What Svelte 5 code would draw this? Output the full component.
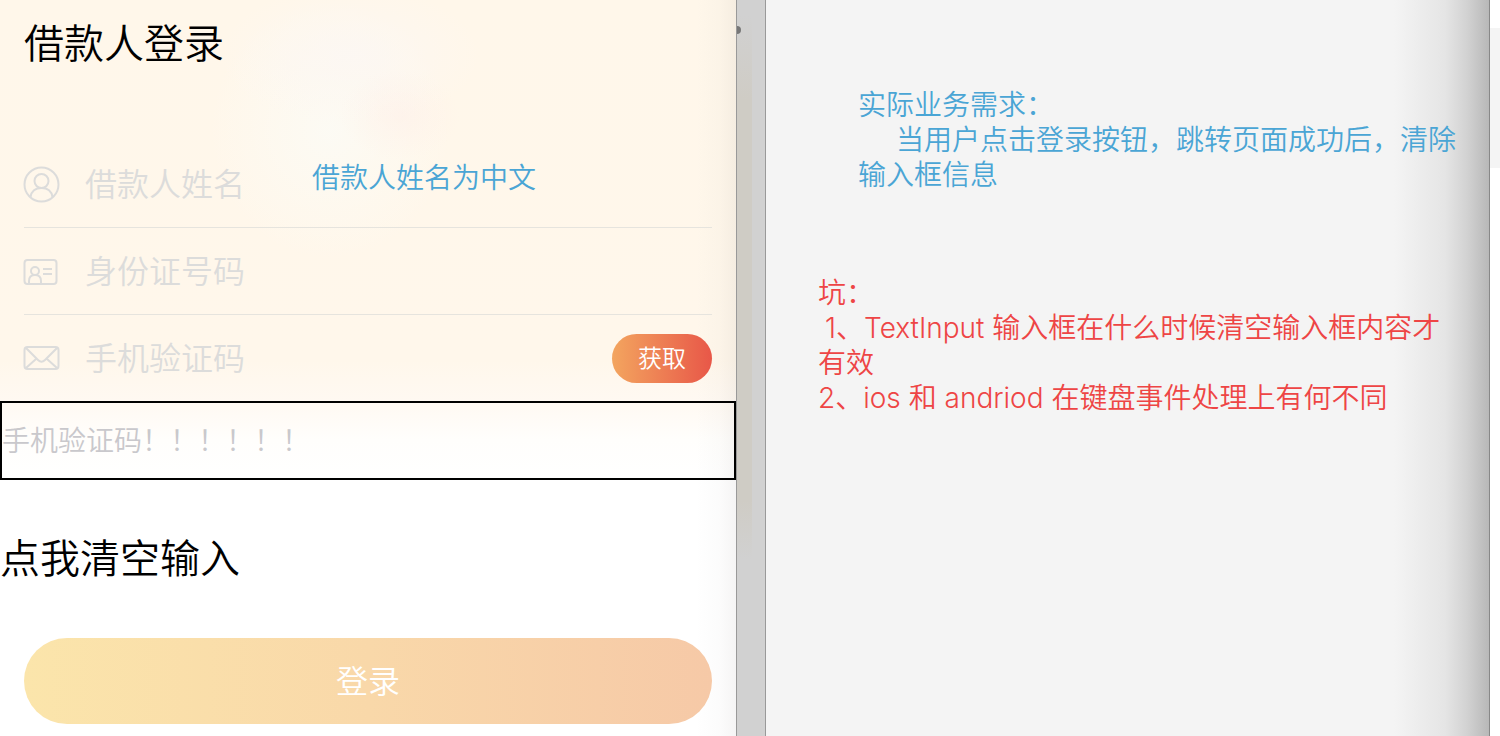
<script>
    let name = $state('');
    let idCard = $state('');
    let code = $state('');
    let extra = $state('');

    const clear = () => {
        extra = '';
    };
</script>


<main>
    <form class="phone" onsubmit={(e) => e.preventDefault()}>
        <h1>借款人登录</h1>

        <div class="row">
            <label for="name" aria-label="借款人姓名">
                <svg viewBox="0 0 36 36">
                    <circle cx="17.5" cy="18.5" r="17" />
                    <circle cx="17.5" cy="15" r="7" />
                    <path d="M6.5 31c1-6 5-9 11-9s10 3 11 9" />
                </svg>
            </label>
            <input id="name" type="text" placeholder="借款人姓名" bind:value={name}>
            <span class="note">借款人姓名为中文</span>
        </div>

        <div class="row">
            <label for="id-card" aria-label="身份证号码">
                <svg viewBox="0 0 36 36">
                    <rect x="0.5" y="7" width="32" height="24" rx="3" />
                    <circle cx="11" cy="18" r="4" />
                    <path d="M5 30v-2c0-4 2-6 6-6s6 2 6 6v2M19 16h9M19 21h9" />
                </svg>
            </label>
            <input id="id-card" type="text" placeholder="身份证号码" bind:value={idCard}>
        </div>

        <div class="row last">
            <label for="code" aria-label="手机验证码">
                <svg viewBox="0 0 36 36">
                    <rect x="0.5" y="7" width="34" height="22" rx="3" />
                    <path d="M2 8l12 12q3.500 3.500 7 0L33 8M2 28l10-9M33 28l-10-9" />
                </svg>
            </label>
            <input id="code" type="text" placeholder="手机验证码" bind:value={code}>
            <button class="fetch" type="button">获取</button>
        </div>

        <input class="boxed" type="text" aria-label="手机验证码" placeholder="手机验证码！！！！！！" bind:value={extra}>

        <button class="clear" type="button" onclick={clear}>点我清空输入</button>
        <button class="login" type="submit">登录</button>
    </form>

    <div class="gutter"><i></i></div>

    <section class="notes">
        <div class="need">
            <p>实际业务需求：</p>
            <p class="indent">当用户点击登录按钮，跳转页面成功后，清除输入框信息</p>
        </div>
        <div class="traps">
            <p>坑：</p>
            <p class="first">1、TextInput 输入框在什么时候清空输入框内容才有效</p>
            <p>2、ios 和 andriod 在键盘事件处理上有何不同</p>
        </div>
    </section>

    <div class="edge"></div>
</main>


<style>
    :global(body) {
        margin: 0;
    }

    main {
        display: grid;
        grid-template-columns: 736fr 30fr 724fr 10fr;
        min-height: 100vh;
        font-family: Inter, "Noto Sans CJK SC", sans-serif;
        font-weight: 350;
    }

    input, button {
        margin: 0;
        padding: 0;
        border: 0;
        background: none;
        color: #000;
        font: inherit;
    }

    h1, p {
        margin: 0;
        font-weight: inherit;
    }

    .phone {
        display: flex;
        flex-direction: column;
        min-width: 0;
        background:
            linear-gradient(to left, rgba(90, 80, 80, 0.06), rgba(90, 80, 80, 0.02) 16px, transparent 40px),
            radial-gradient(ellipse 60px 45px at 400px 115px, rgba(255, 238, 232, 0.5), transparent),
            radial-gradient(ellipse 130px 70px at 350px 55px, rgba(252, 247, 243, 0.9), transparent),
            radial-gradient(ellipse 120px 130px at 330px 130px, rgba(252, 251, 245, 0.9), transparent),
            linear-gradient(#fff7ea 0, #fff7eb 360px, #fff9f2 400px, #fffefc 440px, #fff 480px);
    }

    h1 {
        padding: 14px 24px 67px;
        font-size: 40px;
        line-height: 60px;
    }

    .row {
        position: relative;
        display: flex;
        align-items: center;
        box-sizing: border-box;
        height: 87px;
        margin: 0 24px;
        border-bottom: 1px solid #e6e4de;
    }

    .row.last {
        height: 86px;
        border: 0;
    }

    .row label {
        width: 61px;
        height: 36px;
    }

    svg {
        display: block;
        width: 36px;
        height: 36px;
        overflow: visible;
        fill: none;
        stroke: #dcdcdb;
        stroke-width: 2;
    }

    .row input {
        flex: 1;
        min-width: 0;
        height: 60px;
        font-size: 32px;
    }

    .row input::placeholder {
        color: #dcdcdb;
        opacity: 1;
    }

    .note {
        position: absolute;
        top: 20px;
        left: 288px;
        color: #4aa5d5;
        font-size: 28px;
        line-height: 35px;
    }

    .fetch {
        width: 100px;
        height: 49px;
        padding-bottom: 4px;
        border-radius: 25px;
        background: linear-gradient(to right, #f3a55f, #e85748);
        color: #fff;
        font-size: 24px;
    }

    .boxed {
        box-sizing: border-box;
        height: 79px;
        border: 2px solid #000;
        font-size: 28px;
    }

    .boxed::placeholder {
        color: #c9c8cc;
        opacity: 1;
    }

    .clear {
        align-self: flex-start;
        margin: 49px 0;
        font-size: 40px;
        line-height: 60px;
    }

    .login {
        height: 86px;
        margin: 0 24px;
        padding-bottom: 4px;
        border-radius: 43px;
        background: linear-gradient(to right, #fbe5ab, #f9d8a9 50%, #f6c9a7);
        color: #fff;
        font-size: 32px;
    }

    .gutter {
        box-sizing: border-box;
        border-left: 1px solid #999;
        border-right: 1px solid #999;
        background:
            linear-gradient(#d1d1d1 15px, #cfccc5 100px, #cfccc5 500px, #d1d1d1 560px) no-repeat 0 0 / 15px 100%,
            #d1d1d1;
    }

    .gutter i {
        display: block;
        width: 4px;
        height: 8px;
        margin-top: 26px;
        border-radius: 0 4px 4px 0;
        background: #777;
    }

    .notes {
        box-sizing: border-box;
        padding: 88px 20px 0 52px;
        border-right: 1px solid #888;
        background: linear-gradient(to left, #b8b8b8, #d2d2d2 22px, #e5e5e5 44px, #f4f4f4 95px);
        font-size: 28px;
        line-height: 35px;
    }

    .need {
        padding-left: 40px;
        color: #4aa5d5;
    }

    .indent {
        text-indent: 38px;
    }

    .traps {
        padding-right: 16px;
        margin-top: 83px;
        color: #ee4545;
    }

    .first {
        text-indent: 7px;
    }

    .edge {
        background: linear-gradient(#fff 28px, #f4f4f4 28px, #f4f4f4 168px, #fff 168px);
    }
</style>
